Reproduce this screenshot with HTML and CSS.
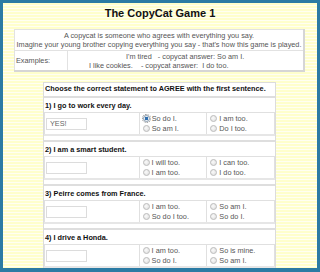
FILE: index.html
```html
<!DOCTYPE html>
<html lang="en">
<head>
  <meta charset="UTF-8">
  <title>The CopyCat Game 1</title>
  <link rel="stylesheet" href="styles.css">
</head>
<body>
<div class="frame">
  <h1>The CopyCat Game 1</h1>

  <table class="intro">
    <tr>
      <td class="lead" colspan="2">
        A copycat is someone who agrees with everything you say.<br>
        Imagine your young brother copying everything you say - that's how this game is played.
      </td>
    </tr>
    <tr>
      <td class="label">Examples:</td>
      <td class="examples">
        <div class="ex-one">I'm tired &nbsp; - copycat answer: So am I.</div>
        <div class="ex-two">I like cookies. &nbsp;&nbsp; - copycat answer: &nbsp;I do too.</div>
      </td>
    </tr>
  </table>

  <div class="quiz">
    <div class="quiz-head">Choose the correct statement to AGREE with the first sentence.</div>

    <div class="question">
      <p class="q-text">1) I go to work every day.</p>
      <table class="answers">
        <tr>
          <td class="field"><input type="text" value="YES!"></td>
          <td class="opts">
            <label><input type="radio" name="q1" checked> So do I.</label>
            <label><input type="radio" name="q1"> So am I.</label>
          </td>
          <td class="opts">
            <label><input type="radio" name="q1"> I am too.</label>
            <label><input type="radio" name="q1"> Do I too.</label>
          </td>
        </tr>
      </table>
    </div>

    <div class="question">
      <p class="q-text">2) I am a smart student.</p>
      <table class="answers">
        <tr>
          <td class="field"><input type="text"></td>
          <td class="opts">
            <label><input type="radio" name="q2"> I will too.</label>
            <label><input type="radio" name="q2"> I am too.</label>
          </td>
          <td class="opts">
            <label><input type="radio" name="q2"> I can too.</label>
            <label><input type="radio" name="q2"> I do too.</label>
          </td>
        </tr>
      </table>
    </div>

    <div class="question">
      <p class="q-text">3) Peirre comes from France.</p>
      <table class="answers">
        <tr>
          <td class="field"><input type="text"></td>
          <td class="opts">
            <label><input type="radio" name="q3"> I am too.</label>
            <label><input type="radio" name="q3"> So do I too.</label>
          </td>
          <td class="opts">
            <label><input type="radio" name="q3"> So am I.</label>
            <label><input type="radio" name="q3"> So do I.</label>
          </td>
        </tr>
      </table>
    </div>

    <div class="question">
      <p class="q-text">4) I drive a Honda.</p>
      <table class="answers">
        <tr>
          <td class="field"><input type="text"></td>
          <td class="opts">
            <label><input type="radio" name="q4"> I am too.</label>
            <label><input type="radio" name="q4"> So do I.</label>
          </td>
          <td class="opts">
            <label><input type="radio" name="q4"> So is mine.</label>
            <label><input type="radio" name="q4"> So am I.</label>
          </td>
        </tr>
      </table>
    </div>
  </div>
</div>
</body>
</html>
```

FILE: styles.css
```css
* {
  margin: 0;
  padding: 0;
  box-sizing: border-box;
}

body {
  font-family: 'Liberation Sans', Arial, sans-serif;
  font-size: 7.3px;
  color: #555;
}

.frame {
  height: 272px;
  overflow: hidden;
  border: 3px solid #2b7ba4;
  border-bottom-width: 4px;
  background: repeating-linear-gradient(#ffffcc 0 2px, #fffff2 2px 3px);
  padding: 4px 0 0;
}

h1 {
  text-align: center;
  font-size: 11px;
  line-height: 13px;
  color: #111;
  font-weight: bold;
  margin-bottom: 9px;
}

/* intro box */
.intro {
  width: 291px;
  margin-left: 11px;
  border-collapse: collapse;
  background: white;
  border: 1px solid #d6d6d6;
  border-right-width: 2px;
  border-bottom-width: 2px;
}

.intro td {
  border: 1px solid #e2e2e2;
  line-height: 9px;
}

.lead {
  text-align: center;
  padding: 1px 0 1px;
}

.label {
  width: 53px;
  padding-left: 1px;
  vertical-align: middle;
}

.examples {
  padding: 1px 0 0;
}

.ex-one {
  padding-left: 58px;
}

.ex-two {
  padding-left: 21px;
}

/* quiz */
.quiz {
  width: 233px;
  margin: 10px 0 0 40px;
  background: white;
  border: 1px solid #dcdcdc;
}

.quiz-head {
  font-weight: bold;
  color: #111;
  line-height: 11px;
  padding: 0 1px 2px;
  border-bottom: 2px solid #dedede;
}

.question {
  border-bottom: 2px solid #dedede;
  padding-bottom: 4px;
}

.q-text {
  font-weight: bold;
  color: #111;
  line-height: 12px;
  padding: 2px 1px 0;
}

.answers {
  width: 100%;
  height: 24px;
  border-collapse: collapse;
}

.answers td {
  border: 1px solid #e0e0e0;
  border-bottom: 2px solid #e6e6e6;
  padding-top: 0;
  padding-bottom: 0;
}

.field {
  width: 95px;
  padding-left: 1px;
}

.field input {
  display: block;
  width: 41px;
  height: 12px;
  border: 1px solid #dcdcdc;
  font: inherit;
  color: #666;
  padding-left: 3px;
  outline: none;
}

.opts {
  width: 68px;
  padding-left: 3px;
}

.opts label {
  display: flex;
  align-items: center;
  gap: 2px;
  height: 10px;
  line-height: 10px;
}

.opts input {
  appearance: none;
  width: 7px;
  height: 7px;
  margin: 0;
  border-radius: 50%;
  border: 1px solid #bdbdbd;
  background: radial-gradient(circle at 40% 40%, #fafafa, #dcdcdc);
}

.opts input:checked {
  border-color: #8a9db0;
  background: radial-gradient(circle, #2f6fb0 0 1.6px, #e8eef4 2px);
  outline: 1px dotted #888;
  outline-offset: 0;
}
```
